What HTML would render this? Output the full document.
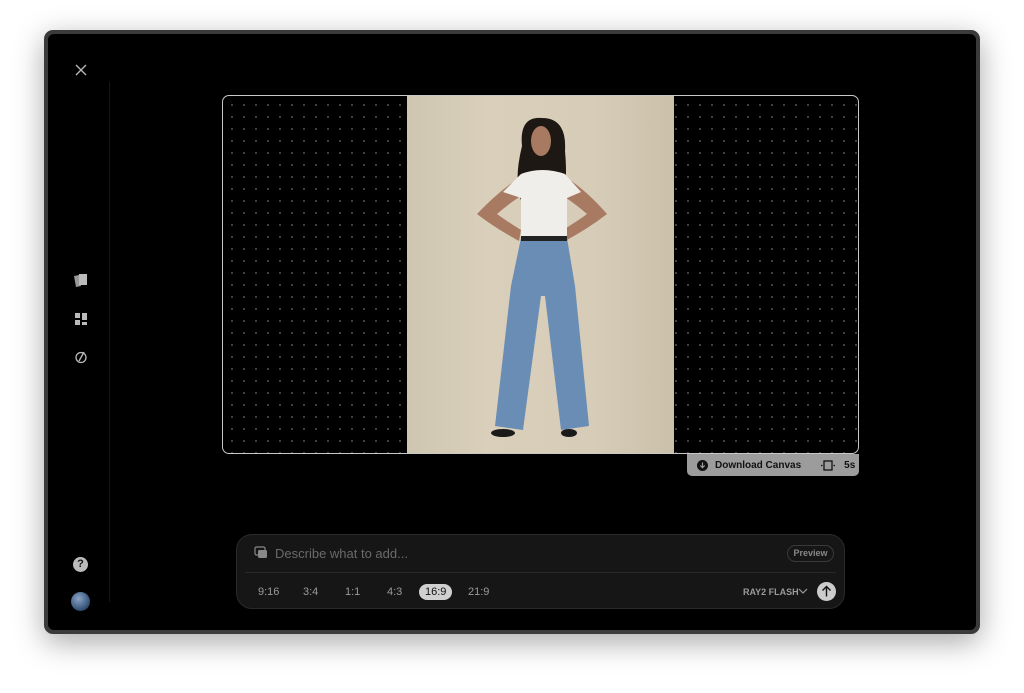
<!DOCTYPE html>
<html><head><meta charset="utf-8"><style>
*{margin:0;padding:0;box-sizing:border-box}
body{width:1024px;height:693px;background:#fff;position:relative;overflow:hidden;font-family:"Liberation Sans",sans-serif}
.win{position:absolute;left:44px;top:30px;width:936px;height:604px;background:#3a3a3a;border-radius:9px;box-shadow:0 8px 30px rgba(0,0,0,.35)}
.inner{position:absolute;left:4px;top:4px;right:4px;bottom:4px;background:#000;border-radius:6px;overflow:hidden}
.div{position:absolute;left:61px;top:48px;width:1px;height:520px;background:#151515}
.canvas{position:absolute;left:174px;top:61px;width:637px;height:359px;border:1.5px solid #c8c8c8;border-radius:7px;overflow:hidden;
background-color:#000;background-image:radial-gradient(circle,#4a4a4a 0.9px,transparent 1.2px);background-size:12px 12px;background-position:3px 3px}
.photo{position:absolute;left:184px;top:0;width:267px;height:100%;background:linear-gradient(90deg,#cfc6b2,#d9cfbb 30%,#d6ccb7 70%,#cbc1ab)}
.dl{position:absolute;left:639px;top:420px;width:172px;height:22px;background:#9c9c9c;border-radius:0 0 5px 5px;font-size:10px;font-weight:bold;color:#111;display:flex;align-items:center}
.prompt{position:absolute;left:188px;top:500px;width:609px;height:75px;background:#161616;border:1px solid #2a2a2a;border-radius:16px}
.ph{position:absolute;left:38px;top:11px;font-size:13px;color:#6a6a6a}
.pv{position:absolute;right:10px;top:10px;width:47px;height:17px;border:1px solid #3a3a3a;border-radius:9px;font-size:9px;color:#888;text-align:center;line-height:15px;font-weight:bold}
.hr{position:absolute;left:8px;right:8px;top:37px;height:1px;background:#2a2a2a}
.r{position:absolute;top:51px;font-size:11px;color:#9a9a9a}
.sel{background:#d0d0d0;color:#111;border-radius:9px;padding:2px 6px;top:49px}
</style></head><body>
<div class="win"><div class="inner">
<svg style="position:absolute;left:27px;top:30px" width="12" height="12"><path d="M1 1L11 11M11 1L1 11" stroke="#bbb" stroke-width="1.3"/></svg>
<div class="div"></div>
<svg style="position:absolute;left:24px;top:238px" width="18" height="16"><path d="M2 4l5-1 2 11-5 1z" fill="#999"/><path d="M7 2h8v11H7z" fill="#bbb"/></svg>
<svg style="position:absolute;left:26px;top:278px" width="14" height="14"><rect x="1" y="1" width="5" height="5" fill="#bbb"/><rect x="8" y="1" width="5" height="7" fill="#bbb"/><rect x="1" y="8" width="5" height="5" fill="#bbb"/><rect x="8" y="10" width="5" height="3" fill="#bbb"/></svg>
<svg style="position:absolute;left:26px;top:316px" width="14" height="14"><circle cx="7" cy="7.5" r="5" stroke="#bbb" stroke-width="1.3" fill="none"/><path d="M5 11L10 2" stroke="#bbb" stroke-width="1.3"/></svg>
<div style="position:absolute;left:25px;top:523px;width:15px;height:15px;border-radius:50%;background:#bbb;color:#111;font-size:11px;font-weight:bold;text-align:center;line-height:15px">?</div>
<div style="position:absolute;left:23px;top:558px;width:19px;height:19px;border-radius:50%;background:radial-gradient(circle at 40% 35%,#8aa4c4,#3d5a80 60%,#1c2a40)"></div>
<div class="canvas"><div class="photo">
<svg width="267" height="359" viewBox="0 0 267 359">
<path d="M115 50 Q112 20 135 22 Q160 22 158 55 Q162 100 150 115 L120 115 Q104 95 115 50z" fill="#1e1814"/>
<ellipse cx="134" cy="45" rx="10" ry="15" fill="#a87a62"/>
<path d="M112 82 Q92 95 70 118 Q88 132 112 145 L114 134 Q98 124 90 118 Q104 106 114 100z" fill="#a87a62"/>
<path d="M160 82 Q180 95 200 118 Q182 132 158 145 L156 134 Q172 124 180 118 Q166 106 156 100z" fill="#a87a62"/>
<path d="M114 78 Q135 70 158 78 L174 96 L160 102 L160 142 L114 142 L114 102 L96 96z" fill="#f0eeea"/>
<path d="M114 142 L160 142 L168 190 L182 330 L154 334 L138 200 L134 200 L116 334 L88 330 L104 190z" fill="#6a8db5"/>
<rect x="114" y="140" width="46" height="5" fill="#222"/>
<ellipse cx="96" cy="337" rx="12" ry="4" fill="#1a1a1a"/><ellipse cx="162" cy="337" rx="8" ry="4" fill="#1a1a1a"/>
</svg></div></div>
<div class="dl">
<div style="margin-left:10px;width:11px;height:11px;border-radius:50%;background:#111;position:relative"><svg width="11" height="11" style="position:absolute;left:0;top:0"><path d="M5.5 2.5v5M3.3 5.5l2.2 2.2 2.2-2.2" stroke="#9c9c9c" stroke-width="1.2" fill="none"/></svg></div>
<span style="margin-left:7px">Download Canvas</span>
<svg style="margin-left:19px" width="16" height="11"><rect x="4" y="1" width="8" height="9" stroke="#111" stroke-width="1.3" fill="none"/><path d="M1 5.5h1.5M13.5 5.5H15" stroke="#111" stroke-width="1.3"/></svg>
<span style="margin-left:8px">5s</span></div>
<div class="prompt">
<svg style="position:absolute;left:17px;top:11px" width="14" height="13"><rect x="1" y="1" width="10" height="8" rx="1.5" stroke="#888" stroke-width="1.2" fill="none"/><rect x="4" y="4" width="9" height="8" rx="1.5" fill="#888"/></svg>
<div class="ph">Describe what to add...</div>
<div class="pv">Preview</div>
<div class="hr"></div>
<span class="r" style="left:21px">9:16</span>
<span class="r" style="left:66px">3:4</span>
<span class="r" style="left:108px">1:1</span>
<span class="r" style="left:150px">4:3</span>
<span class="r sel" style="left:182px">16:9</span>
<span class="r" style="left:231px">21:9</span>
<span class="r" style="left:506px;font-size:9px;font-weight:bold;top:52px">RAY2 FLASH</span>
<svg style="position:absolute;left:561px;top:53px" width="10" height="7"><path d="M1 1l4 4 4-4" stroke="#999" stroke-width="1.2" fill="none"/></svg>
<div style="position:absolute;left:580px;top:47px;width:19px;height:19px;border-radius:50%;background:#ccc"><svg width="19" height="19"><path d="M9.5 4.5v10M5.5 8.5l4-4 4 4" stroke="#111" stroke-width="1.4" fill="none"/></svg></div>
</div>
</div></div>
</body></html>
